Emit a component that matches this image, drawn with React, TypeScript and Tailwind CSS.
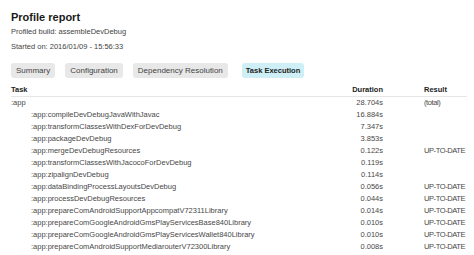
import React from "react";

const rows: [string, string, string, boolean][] = [
  [":app", "28.704s", "(total)", false],
  [":app:compileDevDebugJavaWithJavac", "16.884s", "", true],
  [":app:transformClassesWithDexForDevDebug", "7.347s", "", true],
  [":app:packageDevDebug", "3.853s", "", true],
  [":app:mergeDevDebugResources", "0.122s", "UP-TO-DATE", true],
  [":app:transformClassesWithJacocoForDevDebug", "0.119s", "", true],
  [":app:zipalignDevDebug", "0.114s", "", true],
  [":app:dataBindingProcessLayoutsDevDebug", "0.056s", "UP-TO-DATE", true],
  [":app:processDevDebugResources", "0.044s", "UP-TO-DATE", true],
  [":app:prepareComAndroidSupportAppcompatV72311Library", "0.014s", "UP-TO-DATE", true],
  [":app:prepareComGoogleAndroidGmsPlayServicesBase840Library", "0.010s", "UP-TO-DATE", true],
  [":app:prepareComGoogleAndroidGmsPlayServicesWallet840Library", "0.010s", "UP-TO-DATE", true],
  [":app:prepareComAndroidSupportMediarouterV72300Library", "0.008s", "UP-TO-DATE", true],
];

export default function App() {
  return (
    <div className="w-[474px] h-[255px] overflow-hidden bg-white text-[#222] pl-[11px] pr-[7px] pt-[10px]" style={{ fontFamily: '"Liberation Sans", Arial, sans-serif' }}>
      <h1 className="text-[11px] font-bold leading-[14px] text-[#1a1a1a]">Profile report</h1>
      <div className="text-[7.5px] leading-[15px] text-[#444]">Profiled build: assembleDevDebug</div>
      <div className="text-[7.5px] leading-[15px] text-[#444]">Started on: 2016/01/09 - 15:56:33</div>
      <div className="mt-[9px] flex gap-[10px] text-[8px]">
        <div className="rounded-[3px] bg-[#e8e8e8] px-[5px] h-[15px] leading-[15px] text-[#444]">Summary</div>
        <div className="rounded-[3px] bg-[#e8e8e8] px-[5px] h-[15px] leading-[15px] text-[#444]">Configuration</div>
        <div className="rounded-[3px] bg-[#e8e8e8] px-[5px] h-[15px] leading-[15px] text-[#444]">Dependency Resolution</div>
        <div className="ml-[4px] rounded-[3px] bg-[#cdeff5] px-[4px] h-[15px] leading-[15px] text-[7.5px] font-bold text-[#222]">Task Execution</div>
      </div>
      <div className="mt-[6px] text-[7.5px]">
        <div className="flex h-[13px] leading-[12px] font-bold border-b border-[#e6e6e6] text-[#222]">
          <div className="flex-1 min-w-0">Task</div>
          <div className="w-[100px] shrink-0 text-right">Duration</div>
          <div className="w-[41px] shrink-0" />
          <div className="w-[43px] shrink-0 whitespace-nowrap">Result</div>
        </div>
        {rows.map(([t, d, r, ind]) => (
          <div key={t} className="flex h-[12px] leading-[12px] text-[#484848]">
            <div className={ind ? "flex-1 min-w-0 whitespace-nowrap pl-[20px]" : "flex-1 min-w-0 whitespace-nowrap"}>{t}</div>
            <div className="w-[100px] shrink-0 text-right">{d}</div>
            <div className="w-[41px] shrink-0" />
            <div className="w-[43px] shrink-0 whitespace-nowrap tracking-[-0.4px]">{r}</div>
          </div>
        ))}
      </div>
    </div>
  );
}
